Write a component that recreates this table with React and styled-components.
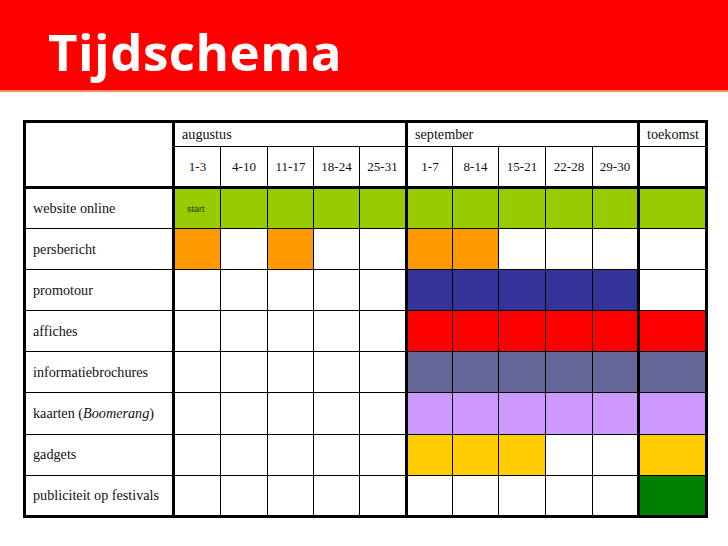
import React from "react";
import styled, { createGlobalStyle } from "styled-components";

const GlobalStyle = createGlobalStyle`
  html, body {
    margin: 0;
    padding: 0;
    background: #ffffff;
  }
`;

// kleuren uit de legenda van het schema
const colors = {
  g: "#99cc00",
  o: "#ff9900",
  n: "#333399",
  r: "#ff0000",
  s: "#666699",
  l: "#cc99ff",
  y: "#ffcc00",
  d: "#008000",
};

const augustus = ["1-3", "4-10", "11-17", "18-24", "25-31"];
const september = ["1-7", "8-14", "15-21", "22-28", "29-30"];

const rows = [
  { label: "website online", cells: "ggggggggggg", start: true },
  { label: "persbericht", cells: "o.o..oo...." },
  { label: "promotour", cells: ".....nnnnn." },
  { label: "affiches", cells: ".....rrrrrr" },
  { label: "informatiebrochures", cells: ".....ssssss" },
  { label: <>kaarten (<em>Boomerang</em>)</>, cells: ".....llllll" },
  { label: "gadgets", cells: ".....yyy..y" },
  { label: "publiciteit op festivals", cells: "..........d" },
];

const widths = [149, 47, 47, 46, 46, 47, 46, 46, 47, 47, 46, 68];

const App = () => {
  return (
    <>
      <GlobalStyle />
      <Page>
        <Banner>
          <Title>Tijdschema</Title>
        </Banner>
        <Schedule>
          <colgroup>
            {widths.map((w, i) => (
              <col key={i} style={{ width: w }} />
            ))}
          </colgroup>
          <thead>
            <HeadRow $h={25}>
              <Cell rowSpan={2} $thickRight />
              <MonthCell colSpan={5}>augustus</MonthCell>
              <MonthCell colSpan={5} $thickLeft>
                september
              </MonthCell>
              <MonthCell $thickLeft $center>
                toekomst
              </MonthCell>
            </HeadRow>
            <HeadRow $h={41} $thickBottom>
              {augustus.map((w) => (
                <WeekCell key={w}>{w}</WeekCell>
              ))}
              {september.map((w, i) => (
                <WeekCell key={w} $thickLeft={i === 0}>
                  {w}
                </WeekCell>
              ))}
              <WeekCell $thickLeft />
            </HeadRow>
          </thead>
          <tbody>
            {rows.map((row, r) => (
              <BodyRow key={r}>
                <LabelCell>{row.label}</LabelCell>
                {row.cells.split("").map((c, i) => (
                  <Cell
                    key={i}
                    $fill={colors[c]}
                    $thickLeft={i === 0 || i === 5 || i === 10}
                  >
                    {row.start && i === 0 ? <Start>start</Start> : null}
                  </Cell>
                ))}
              </BodyRow>
            ))}
          </tbody>
        </Schedule>
      </Page>
    </>
  );
};

const Page = styled.div`
  width: 728px;
  height: 546px;
  background: #ffffff;
  overflow: hidden;
`;

const Banner = styled.div`
  height: 92px;
  background: #ff0000;
  border-bottom: 2px solid #ff8a5c;
  padding: 26px 0 0 48px;
  box-sizing: border-box;
`;

const Title = styled.h1`
  margin: 0;
  color: #ffffff;
  font-family: "Open Sans", "DejaVu Sans", sans-serif;
  font-weight: 700;
  font-size: 51px;
  letter-spacing: 0.5px;
  line-height: 1;
`;

const Schedule = styled.table`
  margin: 28px 0 0 23px;
  width: 684px;
  table-layout: fixed;
  border-collapse: collapse;
  border: 3px solid #000000;
  font-family: "Liberation Serif", "Times New Roman", serif;
  font-size: 14.2px;
  color: #111111;
`;

const HeadRow = styled.tr`
  height: ${(p) => p.$h}px;
  ${(p) => p.$thickBottom && "border-bottom: 3px solid #000;"}
`;

const BodyRow = styled.tr`
  height: 41.1px;
`;

const Cell = styled.td`
  padding: 0;
  border: 1px solid #000000;
  background: ${(p) => p.$fill || "#ffffff"};
  ${(p) => p.$thickLeft && "border-left: 3px solid #000;"}
  ${(p) => p.$thickRight && "border-right: 3px solid #000;"}
  vertical-align: middle;
`;

const MonthCell = styled(Cell)`
  padding: 0 7px;
  text-align: ${(p) => (p.$center ? "center" : "left")};
`;

const WeekCell = styled(Cell)`
  text-align: center;
  font-size: 13px;
`;

const LabelCell = styled(Cell)`
  padding: 0 7px;
  border-right: 3px solid #000;
  white-space: nowrap;
`;

const Start = styled.span`
  display: block;
  padding-left: 12px;
  font-family: "Liberation Sans", Arial, sans-serif;
  font-size: 9px;
  color: #223300;
`;

export default App;
